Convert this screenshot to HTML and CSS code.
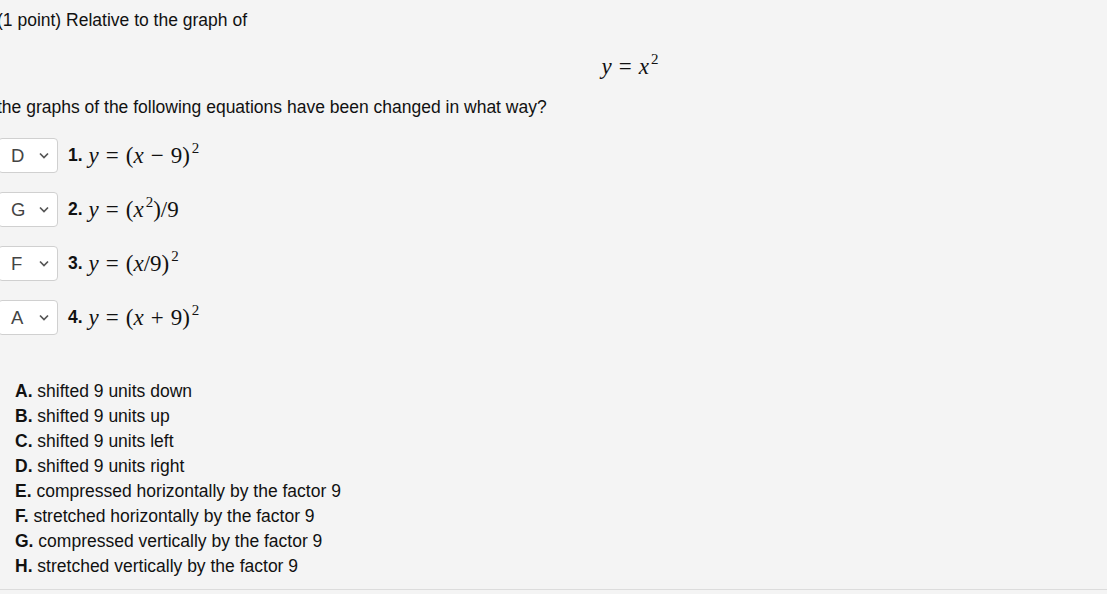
FILE: index.html
```html
<!DOCTYPE html>
<html lang="en">
<head>
    <meta charset="UTF-8">
    <meta name="viewport" content="width=device-width, initial-scale=1.0">
    <title>Problem - Graph Transformations</title>
    <link rel="stylesheet" href="styles.css">
</head>
<body>
    <div class="problem">
        <p class="intro">(1 point) Relative to the graph of</p>

        <div class="display-math">
            <span class="mi">y</span><span class="mo">=</span><span class="mi">x</span><sup class="sup">2</sup>
        </div>

        <p class="question">the graphs of the following equations have been changed in what way?</p>

        <div class="answers">
            <div class="answer-row">
                <div class="select"><span class="select-value">D</span><svg class="chevron" width="10" height="7" viewBox="0 0 10 7"><path d="M1 1.5 L5 5.5 L9 1.5" fill="none" stroke="#555" stroke-width="1.7"/></svg></div>
                <span class="num">1.</span>
                <span class="math"><span class="mi">y</span><span class="mo">=</span><span class="mn">(</span><span class="mi">x</span><span class="mo">&minus;</span><span class="mn">9)</span><sup class="sup">2</sup></span>
            </div>
            <div class="answer-row">
                <div class="select"><span class="select-value">G</span><svg class="chevron" width="10" height="7" viewBox="0 0 10 7"><path d="M1 1.5 L5 5.5 L9 1.5" fill="none" stroke="#555" stroke-width="1.7"/></svg></div>
                <span class="num">2.</span>
                <span class="math"><span class="mi">y</span><span class="mo">=</span><span class="mn">(</span><span class="mi">x</span><sup class="sup">2</sup><span class="mn">)/9</span></span>
            </div>
            <div class="answer-row">
                <div class="select"><span class="select-value">F</span><svg class="chevron" width="10" height="7" viewBox="0 0 10 7"><path d="M1 1.5 L5 5.5 L9 1.5" fill="none" stroke="#555" stroke-width="1.7"/></svg></div>
                <span class="num">3.</span>
                <span class="math"><span class="mi">y</span><span class="mo">=</span><span class="mn">(</span><span class="mi">x</span><span class="mn">/9)</span><sup class="sup">2</sup></span>
            </div>
            <div class="answer-row">
                <div class="select"><span class="select-value">A</span><svg class="chevron" width="10" height="7" viewBox="0 0 10 7"><path d="M1 1.5 L5 5.5 L9 1.5" fill="none" stroke="#555" stroke-width="1.7"/></svg></div>
                <span class="num">4.</span>
                <span class="math"><span class="mi">y</span><span class="mo">=</span><span class="mn">(</span><span class="mi">x</span><span class="mo">+</span><span class="mn">9)</span><sup class="sup">2</sup></span>
            </div>
        </div>

        <ul class="choices">
            <li><b>A.</b> shifted 9 units down</li>
            <li><b>B.</b> shifted 9 units up</li>
            <li><b>C.</b> shifted 9 units left</li>
            <li><b>D.</b> shifted 9 units right</li>
            <li><b>E.</b> compressed horizontally by the factor 9</li>
            <li><b>F.</b> stretched horizontally by the factor 9</li>
            <li><b>G.</b> compressed vertically by the factor 9</li>
            <li><b>H.</b> stretched vertically by the factor 9</li>
        </ul>
    </div>
</body>
</html>
```

FILE: styles.css
```css
* {
    margin: 0;
    padding: 0;
    box-sizing: border-box;
}

html, body {
    overflow: hidden;
}

body {
    background: #f4f4f4;
    font-family: 'Liberation Sans', Arial, sans-serif;
    font-size: 17.5px;
    color: #111;
    height: 594px;
}

.problem {
    margin-left: -3px;
    width: 1266px;
    height: 590px;
    border-bottom: 1px solid #dcdcdc;
    padding-top: 9px;
}

.intro, .question {
    line-height: 22px;
}

.display-math {
    margin-top: 22px;
    height: 28px;
    line-height: 28px;
    text-align: center;
    font-family: 'Liberation Serif', 'Times New Roman', serif;
    font-size: 23px;
}

.question {
    margin-top: 15px;
}

.mi {
    font-style: italic;
}

.mo {
    padding: 0 7px;
}

.sup {
    font-size: 15px;
    vertical-align: 10px;
    line-height: 0;
    margin-left: 2px;
}

.answers {
    margin-top: 20px;
    display: flex;
    flex-direction: column;
    gap: 19px;
}

.answer-row {
    display: flex;
    align-items: center;
    height: 35px;
}

.select {
    width: 60px;
    height: 35px;
    margin-left: 1px;
    background: #fff;
    border: 1px solid #d0d0d0;
    border-radius: 4px;
    display: flex;
    align-items: center;
    padding-left: 12px;
    padding-right: 8px;
    justify-content: space-between;
}

.select-value {
    color: #444;
    font-size: 18.5px;
}

.num {
    font-weight: bold;
    margin-left: 10px;
    margin-right: 6px;
}

.math {
    font-family: 'Liberation Serif', 'Times New Roman', serif;
    font-size: 23px;
}

.choices {
    list-style: none;
    margin-top: 44px;
    padding-left: 18px;
}

.choices li {
    line-height: 25px;
}
```
